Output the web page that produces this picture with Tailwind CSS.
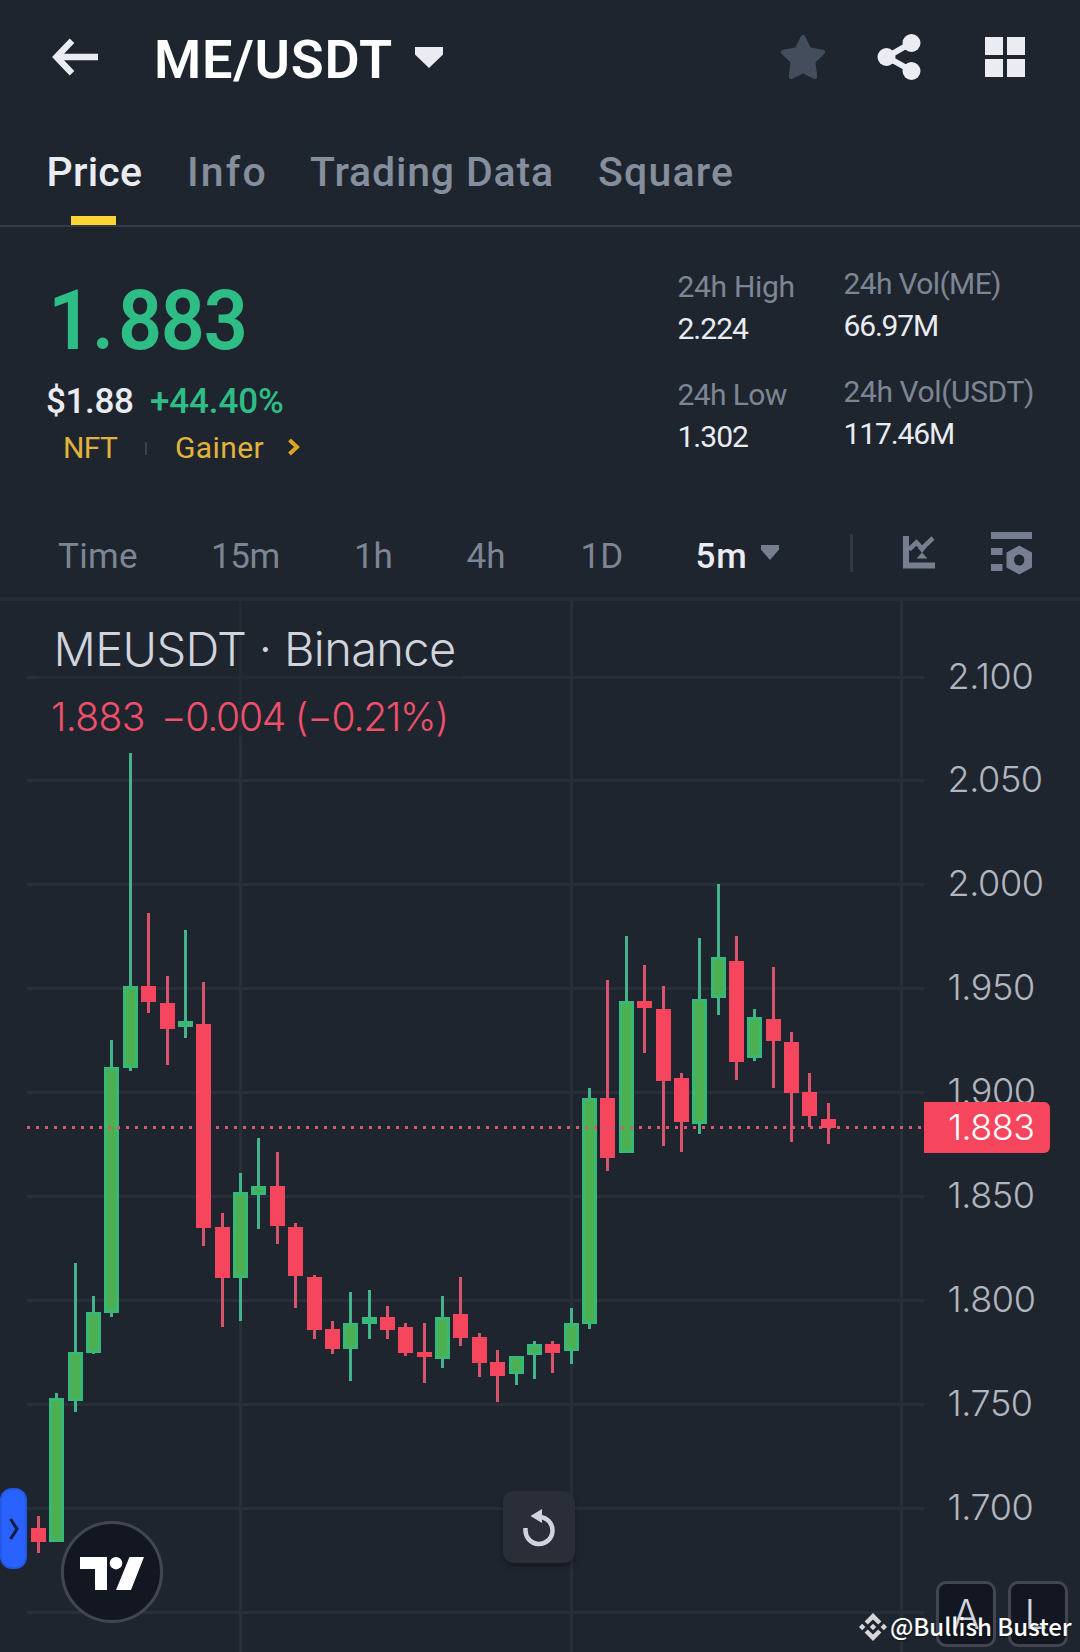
<!DOCTYPE html>
<html lang="en">
<head>
<meta charset="utf-8">
<title>ME/USDT</title>
<script src="https://cdn.jsdelivr.net/npm/@tailwindcss/browser@4"></script>
</head>
<body class="bg-[#1f252f]">
<div class="flex h-[1652px] w-[1080px] flex-col overflow-hidden bg-[#1f252f] font-['Roboto',sans-serif] text-[#eaecf2]">

  <header class="flex h-[115px] shrink-0 items-center pr-[55px] pb-px pl-[52px]">
    <svg class="h-[38px] w-[47px]" viewBox="0 0 47 38" fill="none" stroke="#eaecf2" stroke-width="6.4"><path d="M46 19H4M20 2.8 4.5 19 20 35.2"/></svg>
    <h1 class="ml-[55px] pt-[6px] text-[54px] leading-[60px] font-semibold tracking-[0.78px] whitespace-nowrap text-white">ME/USDT</h1>
    <svg class="ml-[22px] h-[21px] w-[28px]" viewBox="0 0 28 21" fill="#eaecf2"><path d="M0 0H28V7.5L14 21 0 7.5Z"/></svg>
    <svg class="ml-auto h-[46px] w-[46px]" viewBox="0 0 46 46" fill="#444d5b" stroke="#444d5b" stroke-width="5" stroke-linejoin="round"><path d="M23 3.500 28.800 15.600 42.500 18.200 32.800 27.500 34.800 42.500 23 36.500 11.200 42.500 13.200 27.500 3.500 18.200 17.200 15.600Z"/></svg>
    <svg class="ml-[51px] h-[48px] w-[44px]" viewBox="0 0 44 48" fill="#eaecf2"><path d="M34 10 10 24 34 37.500" fill="none" stroke="#eaecf2" stroke-width="6"/><circle cx="34.500" cy="10" r="9"/><circle cx="9.500" cy="24" r="9"/><circle cx="34.500" cy="38" r="9"/></svg>
    <div class="ml-[64px] grid h-[40px] w-[40px] grid-cols-2 gap-[4.5px]">
      <i class="bg-[#eaecf2]"></i><i class="bg-[#eaecf2]"></i><i class="bg-[#eaecf2]"></i><i class="bg-[#eaecf2]"></i>
    </div>
  </header>

  <nav class="flex h-[112px] shrink-0 border-b-2 border-[#343b47] pl-[46.5px] text-[41px] leading-[50px] font-medium whitespace-nowrap text-[#858e9c]">
    <div class="flex w-[139.5px] flex-col justify-between pt-[32px]">
      <span class="tracking-[0.25px] text-[#eaecf2]">Price</span>
      <i class="ml-[24.500px] h-[9px] w-[45px] bg-[#fcd535]"></i>
    </div>
    <span class="w-[124px] pt-[32px] pl-px tracking-[2.2px]">Info</span>
    <span class="w-[288px] pt-[32px] tracking-[0.84px]">Trading Data</span>
    <span class="pt-[32px] tracking-[1.19px]">Square</span>
  </nav>

  <section class="flex h-[288px] shrink-0 whitespace-nowrap">
    <div class="w-[677.5px] pt-[51.5px]">
      <div class="origin-left scale-x-[0.92] pl-[52.500px] text-[84px] leading-[84px] font-semibold tracking-[-1.5px] text-[#2ebd85]">1<span class="pr-[6px] pl-px">.</span>883</div>
      <div class="mt-[19px] flex pl-[46px] text-[35px] leading-[40px] font-medium">
        <span class="w-[104px] tracking-[-0.35px]">$1.88</span>
        <span class="tracking-[-0.12px] text-[#2ebd85]">+44.40%</span>
      </div>
      <div class="mt-[6.500px] flex items-center pl-[63px] text-[30px] leading-[40px] text-[#e0b33a]">
        <span class="w-[82px] tracking-[-0.64px]">NFT</span>
        <i class="h-[13px] w-[2px] bg-[#3a414d]"></i>
        <span class="ml-[28px] w-[113px] tracking-[0.4px]">Gainer</span>
        <svg class="mb-[2px] h-[18px] w-[12px]" viewBox="0 0 12 18" fill="none" stroke="#dba520" stroke-width="4"><path d="M1.500 2 9 9 1.500 16"/></svg>
      </div>
    </div>
    <dl class="flex w-[166px] flex-col pt-[42px] text-[30px] leading-[36px]">
      <dt class="tracking-[-0.32px] text-[#7d8594]">24h High</dt>
      <dd class="mt-[6px] tracking-[-1px]">2.224</dd>
      <dt class="mt-[30px] tracking-[-0.6px] text-[#7d8594]">24h Low</dt>
      <dd class="mt-[6px] tracking-[-1px]">1.302</dd>
    </dl>
    <dl class="flex flex-col pt-[39px] text-[30px] leading-[36px]">
      <dt class="tracking-[-0.65px] text-[#7d8594]">24h Vol(ME)</dt>
      <dd class="mt-[6px] tracking-[-1.17px]">66.97M</dd>
      <dt class="mt-[30px] tracking-[-0.4px] text-[#7d8594]">24h Vol(USDT)</dt>
      <dd class="mt-[6px] tracking-[-1.1px]">117.46M</dd>
    </dl>
  </section>

  <div class="flex h-[86px] shrink-0 items-center border-b-4 border-[#262c36] pt-[2px] pl-[58px] text-[35px] leading-[40px] whitespace-nowrap text-[#7d8594]">
    <span class="w-[153px] tracking-[0.3px]">Time</span>
    <span class="w-[143px] tracking-[-0.4px]">15m</span>
    <span class="w-[112.500px] tracking-[-0.2px]">1h</span>
    <span class="w-[114px]">4h</span>
    <span class="w-[115px]">1D</span>
    <span class="w-[65px] font-medium tracking-[0.8px] text-[#eaecf2]">5m</span>
    <svg class="mb-[9px] h-[15px] w-[18px]" viewBox="0 0 18 15" fill="#767e90"><path d="M0 0H18V4.500L9 15 0 4.500Z"/></svg>
    <i class="mb-[9px] ml-[71.500px] h-[38px] w-[3px] bg-[#323945]"></i>
    <svg class="mb-[11px] ml-[50px] h-[34px] w-[33px]" viewBox="0 0 33 34" fill="none" stroke="#767e90"><path d="M3 1V30.500H32" stroke-width="6"/><path d="M6 14.500 13.500 7.500 19 13.500 30 3" stroke-width="4.500"/><path d="M13.500 23.500 19 17.500 24.500 23.500ZM15 13H23L19 18Z" fill="#767e90" stroke="none"/></svg>
    <svg class="mb-[8px] ml-[54.500px] h-[43px] w-[41px]" viewBox="0 0 41 43" fill="#767e90"><path d="M0 0H41V7H0ZM0 16H11.500V23H0ZM0 32H11.500V39H0ZM28.200 13.500 41 20.500V35.500L28.200 42.500 15.500 35.500V20.500ZM28.200 22.500A5.200 5.500 0 1 0 28.200 33.500 5.200 5.500 0 1 0 28.200 22.500Z" fill-rule="evenodd"/></svg>
  </div>

  <main class="relative flex h-[1051px] shrink-0 overflow-hidden font-['Inter',sans-serif] font-light whitespace-nowrap">
    <svg id="chart" class="absolute inset-0 h-[1051px] w-[1080px]" viewBox="0 601 1080 1051" shape-rendering="crispEdges"></svg>

    <div class="relative w-[947.500px]">
      <div class="ml-[39px] h-[136px] w-[424px] bg-[#1f252f]/50 pt-[20px]">
        <div class="pl-[14.500px] text-[47px] leading-[56px] tracking-[-0.65px] text-[#d1d4dc]">MEUSDT · Binance</div>
        <div class="mt-[16px] flex pl-[12px] text-[39px] leading-[48px] text-[#f0506a]">
          <span class="w-[110px] tracking-[-0.6px]">1.883</span>
          <span class="tracking-[-1.2px]">−0.004 (−0.21%)</span>
        </div>
      </div>
    </div>

    <div class="relative flex flex-col pt-[23px] text-[36px] leading-[104px] tracking-[-0.4px] text-[#b2b5be]">
      <span class="-mb-px">2.100</span><span>2.050</span><span>2.000</span><span>1.950</span><span>1.900</span><span>1.850</span><span>1.800</span><span>1.750</span><span>1.700</span>
    </div>

    <div class="absolute top-[501px] left-[924px] h-[51px] w-[126px] rounded-r-[6px] bg-[#f6465d] pl-[24px] text-[36px] leading-[50px] tracking-[-0.6px] text-white">1.883</div>

    <div class="absolute top-[887px] left-0 flex h-[81px] w-[27px] items-center justify-center rounded-[12px] border-2 border-[#2458e6] bg-[#2962ff]">
      <svg class="h-[22px] w-[10px]" viewBox="0 0 10 22" fill="none" stroke="#101a3c" stroke-width="3"><path d="M1.500 1 8 11 1.500 21"/></svg>
    </div>

    <div class="absolute top-[920px] left-[61px] flex size-[102px] items-center justify-center rounded-full border-[3px] border-[#434651] bg-[#131722]">
      <svg class="mt-[3px] h-[33px] w-[64px]" viewBox="0 0 64 33" fill="#fff"><path d="M0 0H27V33H15V12H0ZM49.500 0H64L51 33H36Z"/><circle cx="36" cy="6.200" r="6.200"/></svg>
    </div>

    <div class="absolute top-[890px] left-[503px] flex size-[72px] items-center justify-center rounded-[11px] bg-[#2a2e39] shadow-[0_3px_6px_rgba(0,0,0,0.35)]">
      <svg class="mt-[2px] h-[38px] w-[32px]" viewBox="0 0 32 38" fill="none" stroke="#d1d4dc"><path d="M2.500 19V21A13.500 13.500 0 1 0 17 8" stroke-width="4.500"/><path d="M7.500 7 19 0V14Z" fill="#d1d4dc" stroke="none"/></svg>
    </div>

    <div class="absolute top-[980px] left-[936px] flex gap-[12px] text-center text-[41px] leading-[61px] text-[#d1d4dc]">
      <div class="h-[66px] w-[60px] rounded-[10px] border-[3px] border-[#434651] bg-[#131722]">A</div>
      <div class="h-[66px] w-[60px] rounded-[10px] border-[3px] border-[#434651] bg-[#131722] pr-1">L</div>
    </div>

    <div class="absolute top-[1009px] left-[859px] flex items-center font-['Noto_Sans_CJK_SC',sans-serif] text-[24px] leading-[36px] font-medium text-white">
      <svg class="h-[28px] w-[28px]" viewBox="0 0 28 28" fill="#d6d6d8"><path d="M14 0 22.400 8.400 19.200 11.600 14 6.400 8.800 11.600 5.600 8.400ZM14 28 5.600 19.600 8.800 16.400 14 21.600 19.200 16.400 22.400 19.600ZM14 10.800 17.200 14 14 17.200 10.800 14ZM3.200 10.800 6.400 14 3.200 17.200 0 14ZM24.800 10.800 28 14 24.800 17.200 21.600 14Z"/></svg>
      <span class="-mt-[2px] ml-[3px] [text-shadow:0_1px_2px_rgba(0,0,0,0.5)]">@Bullish Buster</span>
    </div>
  </main>
</div>

<script>
// each candle: centre x, rising (1) or falling (0), wick top, body top, body bottom, wick bottom
const candles = [
[38.5,0,1516,1528,1542,1553],[56.5,1,1393,1398,1542,1542],[75.5,1,1263,1352,1401,1412],[93.5,1,1296,1312,1353,1354],
[111.5,1,1040,1067,1313,1317],[130.5,1,753,986,1068,1071],[148.5,0,913,986,1002,1013],[167.5,0,976,1003,1029,1065],
[185.5,1,930,1021,1027,1038],[203.5,0,982,1024,1228,1246],[222.5,0,1213,1227,1278,1327],[240.5,1,1173,1192,1278,1321],
[258.5,1,1138,1186,1195,1229],[277.5,0,1152,1186,1226,1244],[295.5,0,1223,1227,1276,1308],[314.5,0,1275,1277,1330,1339],
[332.5,0,1321,1329,1349,1354],[350.5,1,1292,1323,1349,1381],[369.5,1,1290,1317,1324,1339],[387.5,0,1306,1317,1330,1339],
[405.5,0,1323,1327,1353,1356],[424.5,0,1323,1352,1357,1383],[442.5,1,1296,1317,1359,1368],[460.5,0,1277,1314,1338,1346],
[479.5,0,1333,1337,1363,1377],[497.5,0,1350,1362,1376,1402],[516.5,1,1356,1356,1374,1385],[534.5,1,1341,1344,1355,1379],
[552.5,0,1341,1344,1353,1373],[571.5,1,1308,1323,1351,1364],[589.5,1,1088,1098,1324,1329],[607.5,0,980,1098,1158,1171],
[626.5,1,936,1001,1153,1153],[644.5,0,965,1001,1008,1053],[663.5,0,986,1009,1081,1146],[681.5,0,1073,1078,1122,1152],
[699.5,1,938,999,1124,1134],[718.5,1,884,957,998,1015],[736.5,0,936,961,1062,1080],[754.5,1,1009,1017,1058,1061],
[773.5,0,967,1019,1041,1088],[791.5,0,1032,1042,1093,1142],[809.5,0,1073,1092,1116,1127],[828.5,0,1103,1119,1128,1144]];
const rect = (x, y, w, h, f) => `<rect x="${x}" y="${y}" width="${w}" height="${h}" fill="${f}"/>`;
let s = rect(27, 676, 897, 3, '#292f39');
for (let y = 779; y < 1652; y += 104) s += rect(27, y, 897, 3, '#292f39');
for (const x of [239, 570, 900]) s += rect(x, 601, 3, 1051, '#292f39');
for (const [x, up, h, t, b, l] of candles) {
  s += rect(x - 1.5, h, 3, l - h, up ? '#43b38a' : '#d9536a');
  s += rect(x - 7.5, t, 15, b - t, up ? '#37b877' : '#f6465d');
  if (up && b - t > 8) s += rect(x - 4.5, t + 3, 9, b - t - 6, '#4caf50');
}
for (let x = 27; x < 924; x += 9) s += rect(x, 1126, 3, 3, '#d9566c');
document.getElementById('chart').innerHTML = s;
</script>
</body>
</html>
